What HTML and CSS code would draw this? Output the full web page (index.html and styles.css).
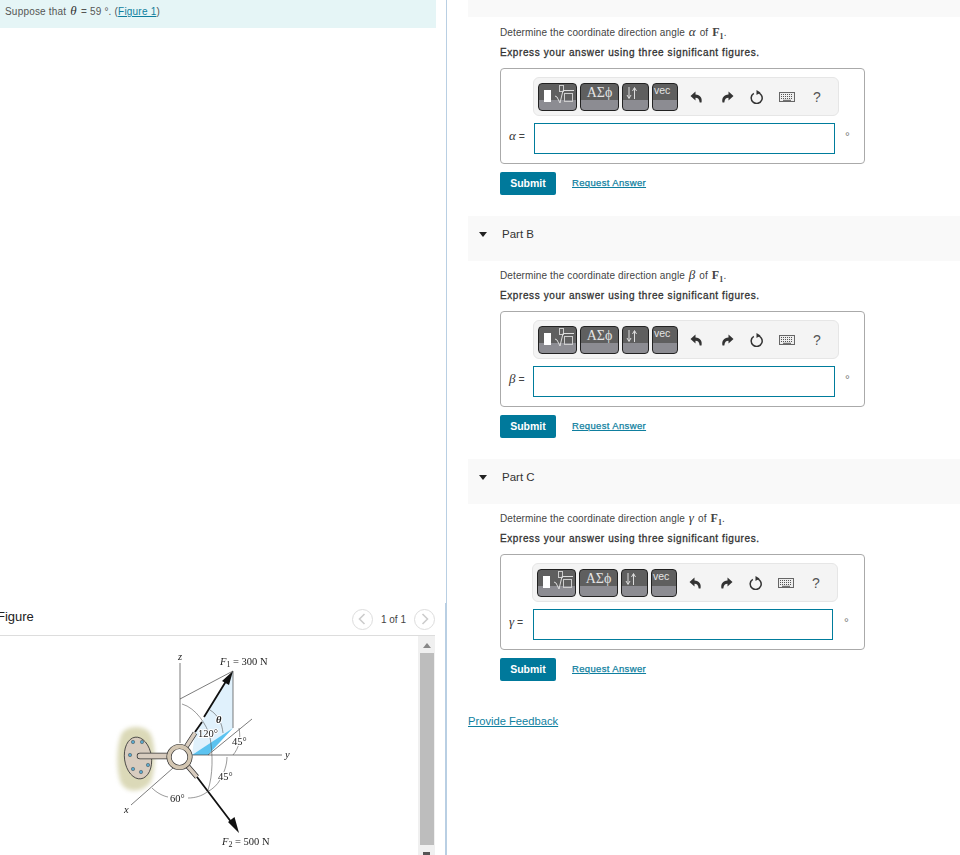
FILE: index.html
```html
<!DOCTYPE html>
<html lang="en">
<head>
<meta charset="utf-8">
<title>Coordinate direction angles</title>
<link rel="stylesheet" href="styles.css">
</head>
<body>
<svg class="defs" width="0" height="0" aria-hidden="true">
  <defs>
    <symbol id="i-tmpl" viewBox="0 0 36 24">
      <rect x="4" y="5" width="7" height="12" fill="#fff"/>
      <rect x="19.500" y="0.500" width="4" height="6" fill="none" stroke="#ccc" stroke-width="1"/>
      <path d="M15 11l2 1 3 6 3-12.500H34" fill="none" stroke="#ddd" stroke-width="1"/>
      <rect x="24.500" y="8.500" width="8" height="8" fill="none" stroke="#ccc" stroke-width="1"/>
    </symbol>
    <symbol id="i-arrows" viewBox="0 0 12 14">
      <path d="M3 1v11M1 9l2 3.500L5 9M8.500 13V2M6.500 5l2-3.500 2 3.500" fill="none" stroke="#ddd" stroke-width="1"/>
    </symbol>
    <symbol id="i-undo" viewBox="0 0 14 14">
      <path d="M5.500 1.500L0.500 6l5 4.500V7.800c2.500 0 3.700 1.400 4.200 4.700h1.800c1-4.300-1.300-8-6-8z" fill="#333"/>
    </symbol>
    <symbol id="i-redo" viewBox="0 0 14 14">
      <path d="M8.500 1.500l5 4.500-5 4.500V7.800c-2.500 0-3.700 1.400-4.200 4.700H2.500c-1-4.300 1.300-8 6-8z" fill="#333"/>
    </symbol>
    <symbol id="i-reset" viewBox="0 0 14 14">
      <path d="M3.800 3.300a5.500 5.500 0 1 0 3.200-0.800" fill="none" stroke="#333" stroke-width="1.500"/>
      <path d="M6.500 0l4 2.500-4 2.500z" fill="#333"/>
    </symbol>
    <symbol id="i-keys" viewBox="0 0 16 10">
      <rect x="0.500" y="0.500" width="15" height="9" fill="#eee" stroke="#666"/>
      <path d="M2 2.500h12M2 4.500h12M2 6.500h12" stroke="#555" stroke-width="1" stroke-dasharray="1 1"/>
      <path d="M4 8.300h8" stroke="#555"/>
    </symbol>
  </defs>
</svg>

<div class="page">
  <aside class="left">
    <div class="prompt">Suppose that <i class="math">θ</i> = 59 °. (<a href="#fig">Figure 1</a>)</div>
    <section class="figure-panel" id="fig">
      <header class="figure-head">
        <h2 class="figure-title">Figure</h2>
        <nav class="pager">
          <span class="pager-btn">
            <svg width="8" height="12" viewBox="0 0 8 12"><path d="M6.500 1L1.500 6l5 5" fill="none" stroke="#ccc" stroke-width="1.600"/></svg>
          </span>
          <span class="pager-text">1 of 1</span>
          <span class="pager-btn">
            <svg width="8" height="12" viewBox="0 0 8 12"><path d="M1.500 1l5 5-5 5" fill="none" stroke="#ccc" stroke-width="1.600"/></svg>
          </span>
        </nav>
      </header>
      <div class="viewer">
        <svg class="diagram" width="180" height="210" viewBox="0 0 180 210">
          <path class="blob" d="M12 88C18 80 34 80 40 88 46 98 46 128 40 138 32 148 16 148 11 138 6 126 6 100 12 88Z"/>
          <path d="M123 26V83L82 110 85 88Z" fill="#e0f1fc"/>
          <path d="M82 110L123 83 98 110Z" fill="#5cc3f0"/>
          <path d="M70 18V98M70 54L123 26M123 26V83M98 110L142 74M82 110H172M63 123L21 160" fill="none" stroke="#444" stroke-width=".7"/>
          <ellipse cx="28" cy="113" rx="13.500" ry="21" transform="rotate(-8 28 113)" fill="#d8ccbf" stroke="#333" stroke-width=".8"/>
          <g fill="#5aa8cc" stroke="#333" stroke-width=".4">
            <circle cx="23" cy="97" r="1.700"/><circle cx="32" cy="97" r="1.700"/><circle cx="20" cy="110" r="1.700"/>
            <circle cx="38" cy="120" r="1.700"/><circle cx="23" cy="124" r="1.700"/><circle cx="31" cy="127" r="1.700"/>
          </g>
          <path d="M30 111H60" stroke="#333" stroke-width="6.500" stroke-linecap="round"/>
          <path d="M30 111H62" stroke="#d8ccbf" stroke-width="5" stroke-linecap="round"/>
          <path d="M76 102L85 88M75 118L87 132" stroke="#333" stroke-width="5"/>
          <path d="M76 102L85 88M75 118L87 132" stroke="#d8ccbf" stroke-width="3.500"/>
          <circle cx="69.500" cy="112" r="10.500" fill="#fff" stroke="#333" stroke-width="5.200"/>
          <circle cx="69.500" cy="112" r="10.500" fill="none" stroke="#d3c6b2" stroke-width="3.800"/>
          <path d="M85 87L92 77M94 72L118 33M87 132L125 182" stroke="#111" stroke-width="1.800"/>
          <path d="M123 26L112 36 119 40ZM129 188L118 177 124.500 172Z" fill="#111"/>
          <g fill="none" stroke="#555" stroke-width=".6">
            <path d="M72 59C86 63 97 80 100 92 103 110 103 130 98 145"/>
            <path d="M42 143C47 148 53 151 58 152M78 153C85 153 92 151 97 147C103 144 107 140 110 135"/>
            <path d="M117 112C117 120 114 128 110 135"/>
            <path d="M129 83C131 94 129 103 123 110"/>
            <path d="M100 65C108 70 112 78 113 88"/>
          </g>
          <g class="fig-text">
            <text x="68" y="15" class="it">z</text>
            <text x="110" y="20"><tspan class="it">F</tspan><tspan class="sub" dy="2">1</tspan><tspan dy="-2"> = 300 N</tspan></text>
            <text x="106" y="78" class="it bold lab">θ</text>
            <text x="88" y="92" class="lab">120°</text>
            <text x="122" y="100" class="lab">45°</text>
            <text x="108" y="135" class="lab">45°</text>
            <text x="60" y="157" class="lab">60°</text>
            <text x="175" y="113" class="it">y</text>
            <text x="14" y="168" class="it">x</text>
            <text x="112" y="200"><tspan class="it">F</tspan><tspan class="sub" dy="2">2</tspan><tspan dy="-2"> = 500 N</tspan></text>
          </g>
        </svg>
        <div class="scrollbar">
          <span class="scroll-up"></span>
          <span class="scroll-thumb"></span>
          <span class="scroll-down"></span>
        </div>
      </div>
    </section>
  </aside>

  <main class="right">
    <div class="strip"></div>

    <div class="part-body">
      <p class="ask">Determine the coordinate direction angle <i class="math">α</i> of <b class="vec">F<sub>1</sub></b>.</p>
      <p class="hint">Express your answer using three significant figures.</p>
      <div class="answer">
        <div class="toolbar">
          <span class="tb tb-a"><svg width="36" height="24"><use href="#i-tmpl"/></svg></span>
          <span class="tb tb-b">ΑΣϕ</span>
          <span class="tb tb-c"><svg width="12" height="14"><use href="#i-arrows"/></svg></span>
          <span class="tb tb-d">vec</span>
          <span class="acts">
            <span class="act"><svg width="14" height="14"><use href="#i-undo"/></svg></span>
            <span class="act"><svg width="14" height="14"><use href="#i-redo"/></svg></span>
            <span class="act"><svg width="14" height="14"><use href="#i-reset"/></svg></span>
            <span class="act"><svg width="16" height="10"><use href="#i-keys"/></svg></span>
            <span class="act act-q">?</span>
          </span>
        </div>
        <div class="entry">
          <label class="var"><i class="math">α</i> =</label>
          <span class="field"></span>
          <span class="unit">°</span>
        </div>
      </div>
      <div class="actions"><button class="submit">Submit</button><a class="req" href="#a">Request Answer</a></div>
    </div>

    <h3 class="part-head"><span class="caret"></span>Part B</h3>
    <div class="part-body">
      <p class="ask">Determine the coordinate direction angle <i class="math">β</i> of <b class="vec">F<sub>1</sub></b>.</p>
      <p class="hint">Express your answer using three significant figures.</p>
      <div class="answer">
        <div class="toolbar">
          <span class="tb tb-a"><svg width="36" height="24"><use href="#i-tmpl"/></svg></span>
          <span class="tb tb-b">ΑΣϕ</span>
          <span class="tb tb-c"><svg width="12" height="14"><use href="#i-arrows"/></svg></span>
          <span class="tb tb-d">vec</span>
          <span class="acts">
            <span class="act"><svg width="14" height="14"><use href="#i-undo"/></svg></span>
            <span class="act"><svg width="14" height="14"><use href="#i-redo"/></svg></span>
            <span class="act"><svg width="14" height="14"><use href="#i-reset"/></svg></span>
            <span class="act"><svg width="16" height="10"><use href="#i-keys"/></svg></span>
            <span class="act act-q">?</span>
          </span>
        </div>
        <div class="entry">
          <label class="var var-b"><i class="math">β</i> =</label>
          <span class="field"></span>
          <span class="unit">°</span>
        </div>
      </div>
      <div class="actions"><button class="submit">Submit</button><a class="req" href="#b">Request Answer</a></div>
    </div>

    <h3 class="part-head"><span class="caret"></span>Part C</h3>
    <div class="part-body">
      <p class="ask">Determine the coordinate direction angle <i class="math">γ</i> of <b class="vec">F<sub>1</sub></b>.</p>
      <p class="hint">Express your answer using three significant figures.</p>
      <div class="answer">
        <div class="toolbar toolbar-c">
          <span class="tb tb-a"><svg width="36" height="24"><use href="#i-tmpl"/></svg></span>
          <span class="tb tb-b">ΑΣϕ</span>
          <span class="tb tb-c"><svg width="12" height="14"><use href="#i-arrows"/></svg></span>
          <span class="tb tb-d">vec</span>
          <span class="acts">
            <span class="act"><svg width="14" height="14"><use href="#i-undo"/></svg></span>
            <span class="act"><svg width="14" height="14"><use href="#i-redo"/></svg></span>
            <span class="act"><svg width="14" height="14"><use href="#i-reset"/></svg></span>
            <span class="act"><svg width="16" height="10"><use href="#i-keys"/></svg></span>
            <span class="act act-q">?</span>
          </span>
        </div>
        <div class="entry">
          <label class="var var-c"><i class="math">γ</i> =</label>
          <span class="field"></span>
          <span class="unit">°</span>
        </div>
      </div>
      <div class="actions"><button class="submit">Submit</button><a class="req" href="#c">Request Answer</a></div>
    </div>

    <a class="feedback" href="#f">Provide Feedback</a>
  </main>
</div>
</body>
</html>
```

FILE: styles.css
```css
* { box-sizing: border-box; }
html, body { margin: 0; padding: 0; height: 855px; overflow: hidden; background: #fff; }
body { font-family: "Liberation Sans", Arial, sans-serif; color: #333; }
.defs { position: absolute; }
a { color: #0f7f9f; }
.page { display: flex; height: 855px; }

/* left pane */
.left { width: 446px; flex: none; display: flex; flex-direction: column; }
.prompt { width: 436px; height: 28px; background: #e5f5f6; padding: 5px 0 0 5px; font-size: 10px; letter-spacing: .2px; line-height: 14px; color: #555; }
.math { font-family: "Liberation Serif", serif; font-style: italic; font-size: 13px; line-height: 0; color: #333; margin: 0 1px; }
.figure-panel { margin-top: auto; height: 252px; border-right: 1px solid #b9cfe3; display: flex; flex-direction: column; }
.figure-head { width: 435px; height: 33px; border-bottom: 1px solid #ddd; display: flex; justify-content: space-between; align-items: center; flex: none; }
.figure-title { margin: 0 0 5px -3px; font-size: 13px; font-weight: 400; color: #222; }
.pager { display: flex; align-items: center; gap: 8px; }
.pager-btn { width: 21px; height: 21px; border: 1px solid #ddd; border-radius: 50%; display: flex; align-items: center; justify-content: center; }
.pager-text { font-size: 10px; color: #444; }
.viewer { flex: 1; display: flex; width: 435px; overflow: hidden; }
.diagram { margin: 9px 0 0 110px; flex: none; filter: blur(.25px); }
.blob { fill: #dbd9b8; filter: blur(2px); }
.fig-text text { font-family: "Liberation Serif", serif; font-size: 10.500px; fill: #222; }
.fig-text .it { font-style: italic; }
.fig-text .bold { font-weight: 700; }
.fig-text .sub { font-size: 8px; }
.fig-text .lab { paint-order: stroke; stroke: #fff; stroke-width: 2px; }
.scrollbar { margin-left: auto; width: 17px; background: #f0f0f0; display: flex; flex-direction: column; align-items: center; }
.scroll-up { margin-top: 7px; width: 0; height: 0; border: 4px solid transparent; border-top: 0; border-bottom: 5px solid #888; }
.scroll-thumb { margin-top: 5px; width: 14px; height: 192px; background: #bdbdbd; flex: none; }
.scroll-down { margin-top: 7px; width: 7px; height: 3px; background: #555; flex: none; }

/* right pane */
.right { flex: 1; border-left: 1px solid #b9cfe3; padding-left: 21px; min-width: 0; }
.strip { height: 17px; background: #f9f9f9; }
.part-body { padding-left: 32px; }
.part-head { margin: 21px 0 0; height: 45px; padding-top: 11px; background: #f9f9f9; display: flex; align-items: flex-start; font-size: 11.500px; line-height: 14px; font-weight: 400; color: #333; }
.caret { width: 0; height: 0; margin: 5px 15px 0 11px; border-left: 4.500px solid transparent; border-right: 4.500px solid transparent; border-top: 5px solid #222; }
.ask, .hint { margin: 0; font-size: 10px; line-height: 14px; }
.ask { padding-top: 9px; letter-spacing: .12px; color: #444; }
.part-head + .part-body .ask { padding-top: 8px; }
.hint { margin-top: 6px; letter-spacing: .6px; color: #333; -webkit-text-stroke: .3px #333; }
.vec { font-family: "Liberation Serif", serif; font-size: 12px; line-height: 0; margin-left: 1px; }
.vec sub { font-size: 8px; line-height: 0; }

.answer { margin-top: 8px; width: 365px; height: 96px; border: 1px solid #aaa; border-radius: 4px; padding: 8px 0 0 8px; }
.toolbar { margin-left: 24px; width: 306px; height: 39px; background: #f4f4f4; border: 1px solid #e6e6e6; border-radius: 6px; padding-left: 4px; display: flex; align-items: center; gap: 3px; }
.toolbar-c { margin-left: 23px; }
.tb { height: 28px; border: 1px solid #222; border-radius: 4px; background: linear-gradient(#5f5f5f 0 62%, #8c8c92 62%); color: #e4e4e4; display: flex; justify-content: center; flex: none; overflow: hidden; }
.tb-a { width: 39px; padding-top: 1px; }
.tb-b { width: 39px; font-family: "Liberation Serif", "DejaVu Serif", serif; font-size: 14px; line-height: 18px; }
.tb-c { width: 27px; padding: 2px 0 0 3px; justify-content: flex-start; }
.tb-d { width: 26px; padding-left: 1px; justify-content: flex-start; font-size: 10.500px; line-height: 13px; }
.acts { display: flex; margin-left: 1px; }
.act { width: 30px; height: 20px; display: flex; align-items: center; justify-content: center; }
.act-q { font-size: 14px; color: #555; }

.entry { margin-top: 7px; display: flex; align-items: center; }
.var { width: 25px; padding-bottom: 6px; font-size: 10.500px; color: #444; white-space: nowrap; }
.var .math { margin: 0; }
.var-b { width: 24px; }
.var-c { width: 24px; }
.field { width: 301px; height: 31px; border: 1px solid #007c9c; background: #fff; }
.var-b + .field { width: 302px; }
.var-c + .field { width: 300px; }
.unit { margin-left: 10px; padding-bottom: 4px; font-size: 12px; color: #777; }
.var-c ~ .unit { margin-left: 11px; }

.actions { margin-top: 8px; display: flex; align-items: center; }
.submit { width: 56px; height: 23px; border: 0; border-radius: 2px; padding: 0 0 2px; background: #00799b; color: #fff; font: 700 10.500px "Liberation Sans", Arial, sans-serif; }
.req { margin: 0 0 2px 16px; font-size: 9.500px; letter-spacing: .35px; -webkit-text-stroke: .25px #0f7f9f; }
.feedback { display: block; margin-top: 33px; font-size: 11.200px; line-height: 14px; }
```
